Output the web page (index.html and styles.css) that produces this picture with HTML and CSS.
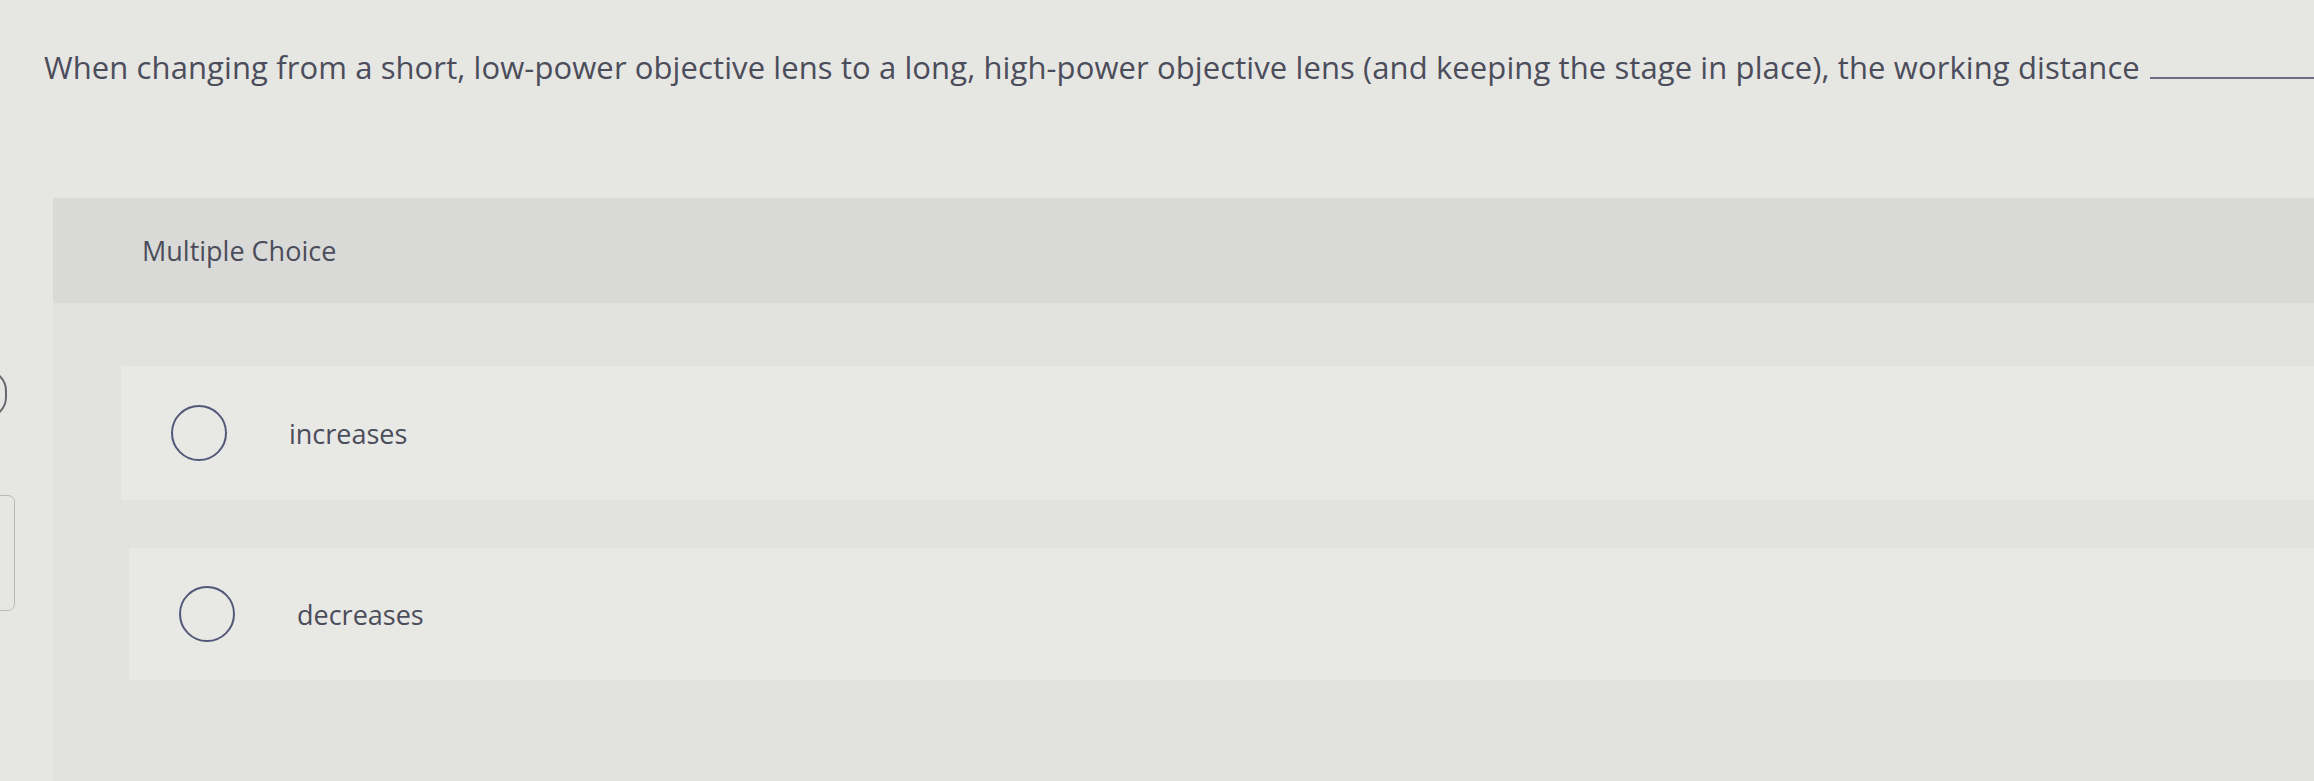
FILE: index.html
```html
<!DOCTYPE html>
<html lang="en">
<head>
<meta charset="utf-8">
<title>Question</title>
<link rel="stylesheet" href="styles.css">
</head>
<body>
  <div class="page">
    <p class="question"><span class="question-text">When changing from a short, low-power objective lens to a long, high-power objective lens (and keeping the stage in place), the working distance</span><span class="blank"></span></p>
    <div class="layout">
      <aside class="rail">
        <span class="rail-dot"></span>
        <span class="rail-box"></span>
      </aside>
      <section class="panel">
        <header class="panel-head">Multiple Choice</header>
        <div class="choices">
          <label class="choice choice-1">
            <span class="radio"></span>
            <span class="choice-text">increases</span>
          </label>
          <label class="choice choice-2">
            <span class="radio"></span>
            <span class="choice-text">decreases</span>
          </label>
        </div>
      </section>
    </div>
  </div>
</body>
</html>
```

FILE: styles.css
```css
* { box-sizing: border-box; }

html, body {
  margin: 0;
  padding: 0;
}

body {
  width: 2314px;
  height: 781px;
  overflow: hidden;
  background: #e6e6e3;
  font-family: "Open Sans", Lato, sans-serif;
  color: #4c4d5b;
}

.page {
  display: flex;
  flex-direction: column;
  height: 781px;
}

.question {
  margin: 0;
  padding: 46px 0 0 44px;
  height: 198px;
  display: flex;
  align-items: baseline;
  font-size: 31px;
  line-height: 42px;
  letter-spacing: 0.1px;
}

.question-text {
  white-space: nowrap;
}

/* answer blank runs to the edge of the page */
.blank {
  flex: 1;
  height: 2px;
  margin: 0 0 3px 10px;
  background: #6b6d86;
}

.layout {
  flex: 1;
  display: flex;
}

/* edge of the neighbouring sidebar */
.rail {
  width: 53px;
  flex: none;
  display: flex;
  flex-direction: column;
}

.rail-dot {
  width: 60px;
  height: 50px;
  margin: 171px 0 0 -53px;
  border: 2px solid #66676c;
  border-radius: 22px;
}

.rail-box {
  width: 60px;
  height: 116px;
  margin: 76px 0 0 -45px;
  border: 1.5px solid #b9b9b6;
  border-radius: 7px;
}

.panel {
  flex: 1;
  display: flex;
  flex-direction: column;
  background: #e2e3e0;
}

.panel-head {
  height: 105px;
  padding: 0 0 0 89px;
  display: flex;
  align-items: center;
  background: #d9dad7;
  font-size: 27px;
}

.choices {
  display: flex;
  flex-direction: column;
  gap: 48px;
  padding: 63px 0 0 68px;
}

.choice {
  display: flex;
  align-items: center;
  height: 134px;
  padding-left: 50px;
  background: #e8e8e5;
  font-size: 27px;
}

.choice-2 {
  margin-left: 8px;
  height: 132px;
}

.radio {
  width: 56px;
  height: 56px;
  flex: none;
  border: 2px solid #535878;
  border-radius: 50%;
}

.choice-text {
  margin-left: 62px;
}
```
